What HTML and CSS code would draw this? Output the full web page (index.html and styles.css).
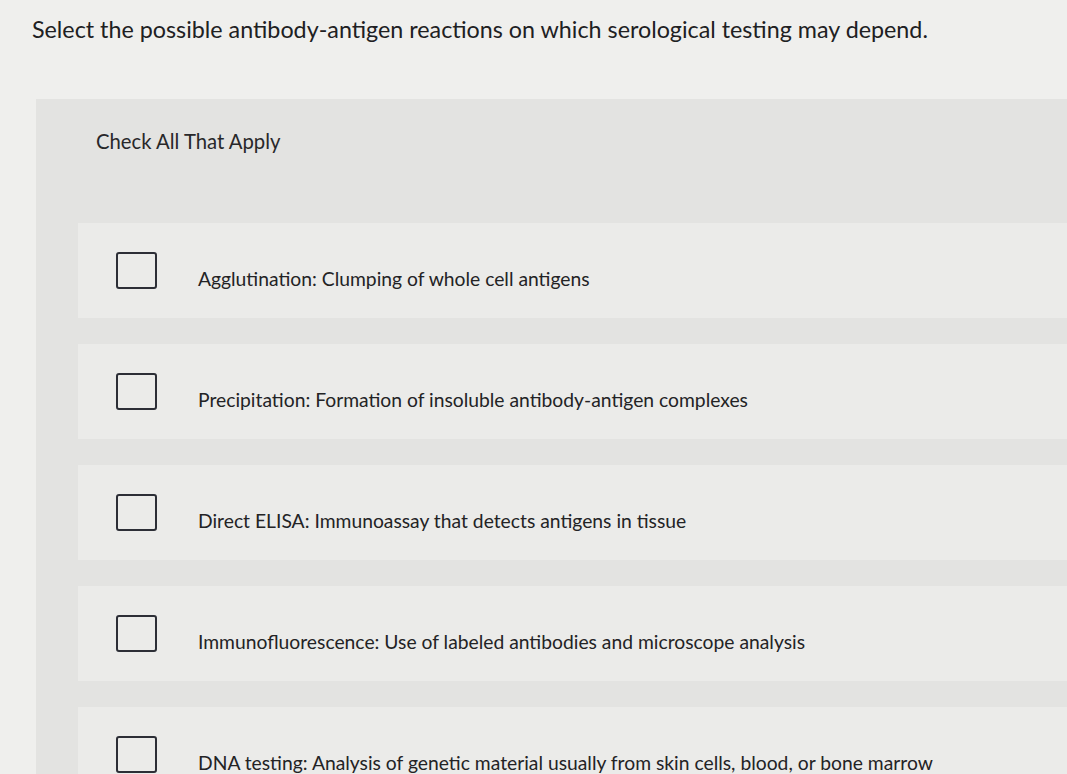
FILE: index.html
```html
<!DOCTYPE html>
<html lang="en">
<head>
<meta charset="utf-8">
<title>Check All That Apply</title>
<link rel="stylesheet" href="styles.css">
</head>
<body>
<main class="page">
  <h1 class="prompt">Select the possible antibody-antigen reactions on which serological testing may depend.</h1>
  <section class="panel">
    <div class="panel-head">Check All That Apply</div>
    <ul class="options">
      <li class="option"><span class="box"></span><span class="label">Agglutination: Clumping of whole cell antigens</span></li>
      <li class="option"><span class="box"></span><span class="label">Precipitation: Formation of insoluble antibody-antigen complexes</span></li>
      <li class="option"><span class="box"></span><span class="label">Direct ELISA: Immunoassay that detects antigens in tissue</span></li>
      <li class="option"><span class="box"></span><span class="label">Immunofluorescence: Use of labeled antibodies and microscope analysis</span></li>
      <li class="option"><span class="box"></span><span class="label">DNA testing: Analysis of genetic material usually from skin cells, blood, or bone marrow</span></li>
    </ul>
  </section>
</main>
</body>
</html>
```

FILE: styles.css
```css
html, body {
  margin: 0;
  padding: 0;
  height: 100%;
  overflow: hidden;
}
body {
  background: #efefed;
  font-family: Lato, "Open Sans", "Liberation Sans", sans-serif;
  color: #262628;
}
.page {
  padding: 12px 0 0 32px;
}
.prompt {
  margin: 0;
  font-size: 23.3px;
  font-weight: 400;
  line-height: 34px;
  color: #202022;
}
.panel {
  margin: 53px 0 0 4px;
  background: #e3e3e1;
  padding-bottom: 40px;
}
.panel-head {
  padding: 26px 0 0 60px;
  height: 98px;
  font-size: 20.3px;
  line-height: 32px;
  color: #28282a;
}
.options {
  list-style: none;
  margin: 0;
  padding: 0 0 0 42px;
  display: flex;
  flex-direction: column;
  gap: 26px;
}
.option {
  height: 95px;
  background: #ebebe9;
  display: flex;
  align-items: center;
  padding-left: 38px;
}
.box {
  flex: none;
  width: 37px;
  height: 33px;
  border: 2.5px solid #2c2e36;
  border-radius: 3px;
}
.label {
  margin-left: 41px;
  padding-top: 16px;
  font-size: 19.3px;
  line-height: 24px;
  color: #232325;
}
```
